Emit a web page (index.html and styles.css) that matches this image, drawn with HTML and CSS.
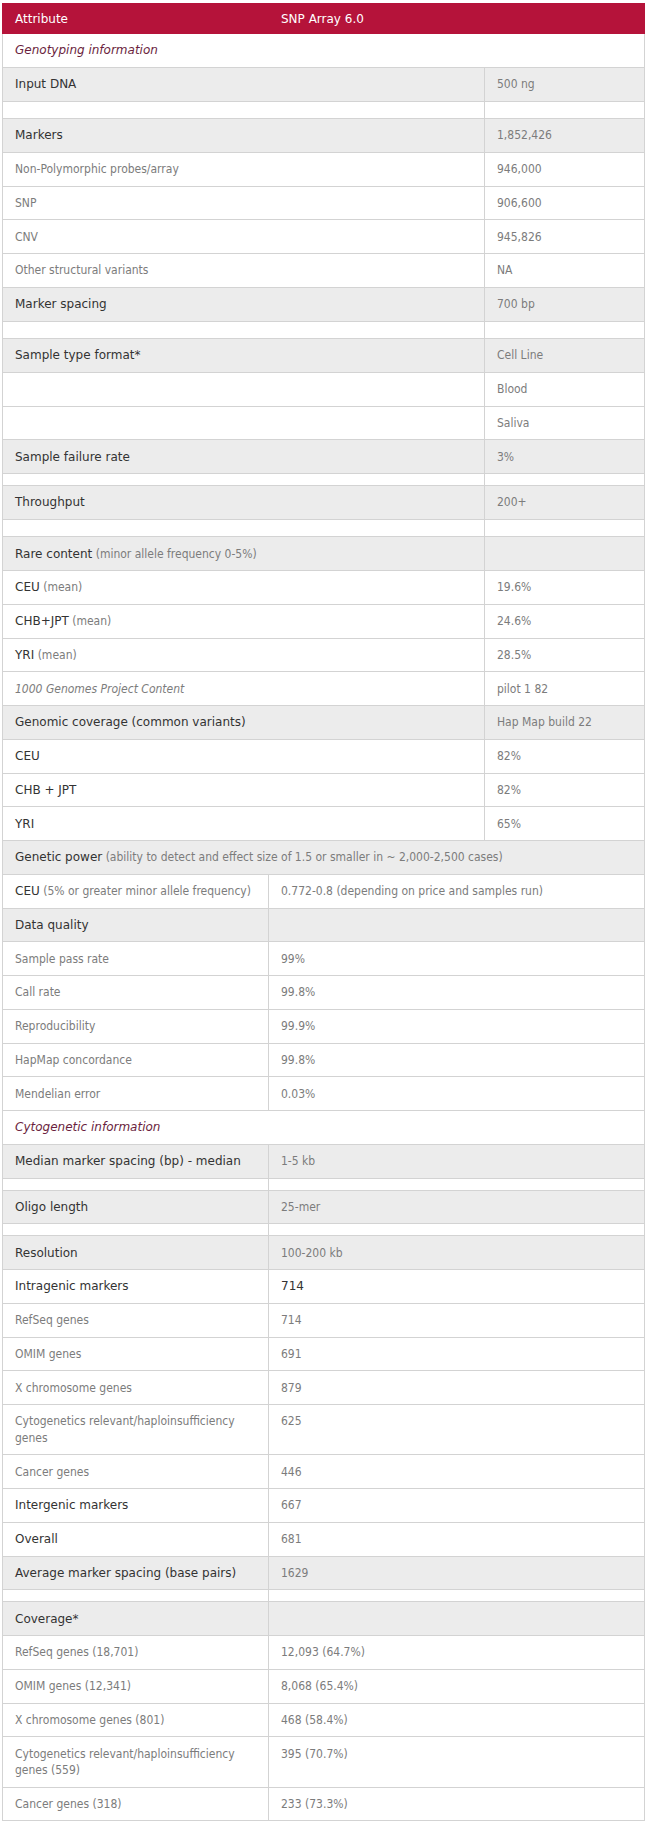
FILE: index.html
```html
<!DOCTYPE html>
<html lang="en">
<head>
<meta charset="utf-8">
<title>SNP Array 6.0</title>
<link rel="stylesheet" href="styles.css">
</head>
<body>
<table class="spec">
  <colgroup><col class="c1"><col class="c2"><col class="c3"></colgroup>
  <thead>
    <tr class="hd"><th>Attribute</th><th colspan="2">SNP Array 6.0</th></tr>
  </thead>
  <tbody>
    <tr><td colspan="3" class="sec">Genotyping information</td></tr>
    <tr class="g"><td colspan="2" class="k">Input DNA</td><td>500 ng</td></tr>
    <tr class="e1"><td colspan="2"></td><td></td></tr>
    <tr class="g"><td colspan="2" class="k">Markers</td><td>1,852,426</td></tr>
    <tr><td colspan="2">Non-Polymorphic probes/array</td><td>946,000</td></tr>
    <tr><td colspan="2">SNP</td><td>906,600</td></tr>
    <tr><td colspan="2">CNV</td><td>945,826</td></tr>
    <tr><td colspan="2">Other structural variants</td><td>NA</td></tr>
    <tr class="g"><td colspan="2" class="k">Marker spacing</td><td>700 bp</td></tr>
    <tr class="e1"><td colspan="2"></td><td></td></tr>
    <tr class="g"><td colspan="2" class="k">Sample type format*</td><td>Cell Line</td></tr>
    <tr><td colspan="2"></td><td>Blood</td></tr>
    <tr><td colspan="2"></td><td>Saliva</td></tr>
    <tr class="g"><td colspan="2" class="k">Sample failure rate</td><td>3%</td></tr>
    <tr class="e2"><td colspan="2"></td><td></td></tr>
    <tr class="g"><td colspan="2" class="k">Throughput</td><td>200+</td></tr>
    <tr class="e1"><td colspan="2"></td><td></td></tr>
    <tr class="g"><td colspan="2"><span class="d">Rare content</span> (minor allele frequency 0-5%)</td><td></td></tr>
    <tr><td colspan="2"><span class="d">CEU</span> (mean)</td><td>19.6%</td></tr>
    <tr><td colspan="2"><span class="d">CHB+JPT</span> (mean)</td><td>24.6%</td></tr>
    <tr><td colspan="2"><span class="d">YRI</span> (mean)</td><td>28.5%</td></tr>
    <tr><td colspan="2" class="it">1000 Genomes Project Content</td><td>pilot 1 82</td></tr>
    <tr class="g"><td colspan="2" class="k">Genomic coverage (common variants)</td><td>Hap Map build 22</td></tr>
    <tr><td colspan="2" class="k">CEU</td><td>82%</td></tr>
    <tr><td colspan="2" class="k">CHB + JPT</td><td>82%</td></tr>
    <tr><td colspan="2" class="k">YRI</td><td>65%</td></tr>
    <tr class="g"><td colspan="3"><span class="d">Genetic power</span> (ability to detect and effect size of 1.5 or smaller in ~ 2,000-2,500 cases)</td></tr>
    <tr><td><span class="d">CEU</span> (5% or greater minor allele frequency)</td><td colspan="2">0.772-0.8 (depending on price and samples run)</td></tr>
    <tr class="g"><td class="k">Data quality</td><td colspan="2"></td></tr>
    <tr><td>Sample pass rate</td><td colspan="2">99%</td></tr>
    <tr><td>Call rate</td><td colspan="2">99.8%</td></tr>
    <tr><td>Reproducibility</td><td colspan="2">99.9%</td></tr>
    <tr><td>HapMap concordance</td><td colspan="2">99.8%</td></tr>
    <tr><td>Mendelian error</td><td colspan="2">0.03%</td></tr>
    <tr><td colspan="3" class="sec">Cytogenetic information</td></tr>
    <tr class="g"><td class="k">Median marker spacing (bp) - median</td><td colspan="2">1-5 kb</td></tr>
    <tr class="e2"><td></td><td colspan="2"></td></tr>
    <tr class="g"><td class="k">Oligo length</td><td colspan="2">25-mer</td></tr>
    <tr class="e2"><td></td><td colspan="2"></td></tr>
    <tr class="g"><td class="k">Resolution</td><td colspan="2">100-200 kb</td></tr>
    <tr><td class="k">Intragenic markers</td><td colspan="2" class="k">714</td></tr>
    <tr><td>RefSeq genes</td><td colspan="2">714</td></tr>
    <tr><td>OMIM genes</td><td colspan="2">691</td></tr>
    <tr><td>X chromosome genes</td><td colspan="2">879</td></tr>
    <tr><td>Cytogenetics relevant/haploinsufficiency genes</td><td colspan="2">625</td></tr>
    <tr><td>Cancer genes</td><td colspan="2">446</td></tr>
    <tr><td class="k">Intergenic markers</td><td colspan="2">667</td></tr>
    <tr><td class="k">Overall</td><td colspan="2">681</td></tr>
    <tr class="g"><td class="k">Average marker spacing (base pairs)</td><td colspan="2">1629</td></tr>
    <tr class="e2"><td></td><td colspan="2"></td></tr>
    <tr class="g"><td class="k">Coverage*</td><td colspan="2"></td></tr>
    <tr><td>RefSeq genes (18,701)</td><td colspan="2">12,093 (64.7%)</td></tr>
    <tr><td>OMIM genes (12,341)</td><td colspan="2">8,068 (65.4%)</td></tr>
    <tr><td>X chromosome genes (801)</td><td colspan="2">468 (58.4%)</td></tr>
    <tr><td>Cytogenetics relevant/haploinsufficiency genes (559)</td><td colspan="2">395 (70.7%)</td></tr>
    <tr><td>Cancer genes (318)</td><td colspan="2">233 (73.3%)</td></tr>
  </tbody>
</table>
</body>
</html>
```

FILE: styles.css
```css
html, body {
  margin: 0;
  background: #ffffff;
}

body {
  padding: 3px 0 0 2px;
  font-family: "DejaVu Sans", Verdana, sans-serif;
}

.spec {
  border-collapse: collapse;
  table-layout: fixed;
  width: 642px;
}

.spec col.c1 { width: 266px; }
.spec col.c2 { width: 216px; }
.spec col.c3 { width: 160px; }

.spec th {
  background: #b5133a;
  color: #ffffff;
  font-family: "DejaVu Sans", Verdana, sans-serif;
  font-weight: normal;
  font-size: 12px;
  text-align: left;
  padding: 6.5px 12px;
  line-height: 16px;
  border: 1px solid #b5133a;
}

.spec th + th {
  border-left: 1px solid #c9506c;
}

.spec td {
  border: 1px solid #d3d3d3;
  padding: 8.25px 12px 8px;
  line-height: 16.5px;
  font-family: "DejaVu Sans Condensed", "DejaVu Sans", sans-serif;
  font-size: 12px;
  color: #7c7c7c;
  vertical-align: top;
  text-align: left;
}

.spec tr.g td {
  background: #ececec;
}

.spec td.k {
  font-family: "DejaVu Sans", Verdana, sans-serif;
  color: #333333;
}

.spec td .d {
  font-family: "DejaVu Sans", Verdana, sans-serif;
  font-size: 12px;
  line-height: 1;
  color: #333333;
}

.spec td.sec {
  font-family: "DejaVu Sans", Verdana, sans-serif;
  font-style: italic;
  color: #6b1f3e;
}

.spec td.it {
  font-style: italic;
}

.spec tr.e1 td {
  padding: 0;
  height: 16.5px;
}

.spec tr.e2 td {
  padding: 0;
  height: 11px;
}
```
